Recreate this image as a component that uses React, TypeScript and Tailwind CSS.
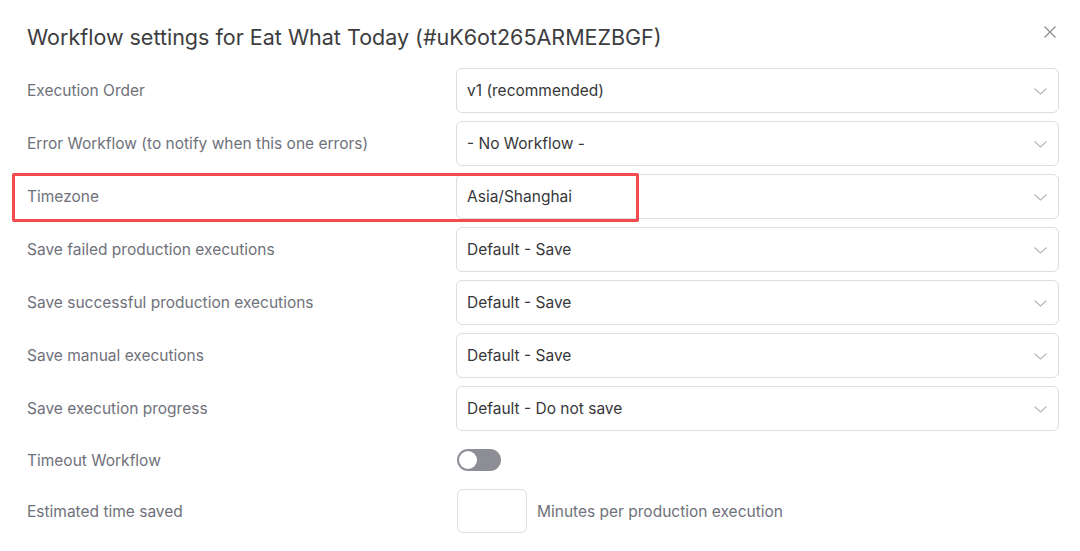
import { useState } from "react";

const rows = [
  { label: "Execution Order", value: "v1 (recommended)" },
  { label: "Error Workflow (to notify when this one errors)", value: "- No Workflow -" },
  { label: "Timezone", value: "Asia/Shanghai" },
  { label: "Save failed production executions", value: "Default - Save" },
  { label: "Save successful production executions", value: "Default - Save" },
  { label: "Save manual executions", value: "Default - Save" },
  { label: "Save execution progress", value: "Default - Do not save" },
];

function Chevron() {
  return (
    <svg width="13" height="7" viewBox="0 0 13 7" fill="none" className="shrink-0">
      <path d="M0.5 0.5L6.5 6L12.5 0.5" stroke="#b4b5bd" strokeWidth="1.1" />
    </svg>
  );
}

export default function App() {
  const [timeout, setTimeoutOn] = useState(false);
  const [minutes, setMinutes] = useState("");

  return (
    <div
      className="relative h-[551px] w-[1080px] overflow-hidden bg-white"
      style={{ fontFamily: "Inter, 'Noto Sans', sans-serif" }}
    >
      <div className="pl-[27px] pr-[21px] pt-[23px]">
        <div className="flex h-[28px] items-center justify-between">
          <h1 className="text-[21.5px] leading-[28px] font-normal text-[#3d3d3f]">
            Workflow settings for Eat What Today (#uK6ot265ARMEZBGF)
          </h1>
          <button className="mr-[3px] mt-[-10px] text-[#8b8b8f]">
            <svg width="12" height="12" viewBox="0 0 12 12">
              <path d="M0.5 0.5L11.5 11.5M11.5 0.5L0.5 11.5" stroke="currentColor" strokeWidth="1.1" />
            </svg>
          </button>
        </div>

        <div className="mt-[17px] flex flex-col gap-[8px]">
          {rows.map((row) => (
            <div key={row.label} className="flex h-[45px] items-center">
              <div className="w-[429px] shrink-0 pt-[1px] text-[15.5px] text-[#6f717a]">{row.label}</div>
              <div className="flex h-full flex-1 cursor-pointer items-center justify-between rounded-[6px] border border-[#dcdde3] pl-[10px] pr-[11px] pt-[1px] text-[15.5px] text-[#37373a]">
                <span>{row.value}</span>
                <Chevron />
              </div>
            </div>
          ))}

          <div className="flex h-[42px] items-center">
            <div className="w-[430px] shrink-0 pt-[1px] text-[15.5px] text-[#6f717a]">Timeout Workflow</div>
            <button
              onClick={() => setTimeoutOn(!timeout)}
              className={
                "flex h-[22px] w-[44px] items-center rounded-full px-[2px] " +
                (timeout ? "justify-end bg-[#ff6d5a]" : "justify-start bg-[#8d8e95]")
              }
            >
              <span className="h-[18px] w-[18px] rounded-full bg-white" />
            </button>
          </div>

          <div className="flex h-[44px] items-center">
            <div className="w-[430px] shrink-0 pt-[1px] text-[15.5px] text-[#6f717a]">Estimated time saved</div>
            <input
              value={minutes}
              onChange={(e) => setMinutes(e.target.value)}
              className="h-[44px] w-[70px] rounded-[6px] border border-[#dcdde3] px-2 text-[15px] outline-none"
            />
            <span className="ml-[10px] pt-[1px] text-[15.5px] text-[#6f717a]">Minutes per production execution</span>
          </div>
        </div>
      </div>

      {/* highlight annotation */}
      <div className="pointer-events-none absolute left-[12px] top-[173px] h-[49px] w-[627px] rounded-[2px] border-[3px] border-[#f4494d]" />
    </div>
  );
}
